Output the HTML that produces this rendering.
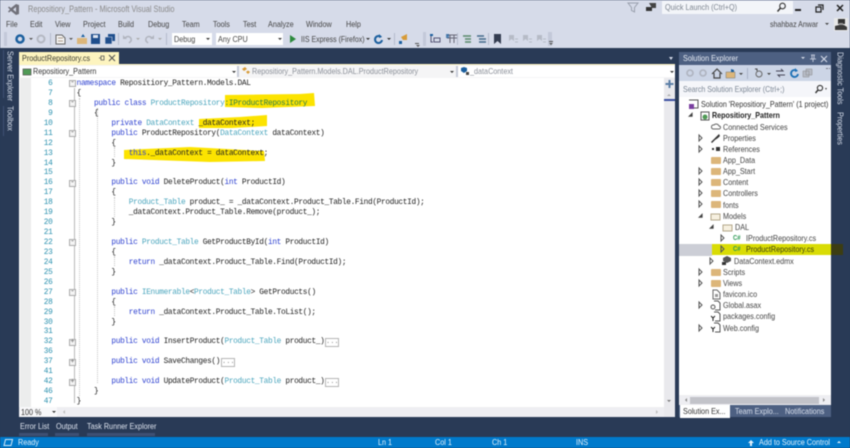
<!DOCTYPE html>
<html><head><meta charset="utf-8"><style>
*{box-sizing:border-box}
html,body{margin:0;padding:0;width:850px;height:448px;overflow:hidden;background:#293a56}
body{position:relative;font-family:"Liberation Sans",sans-serif;font-size:8.6px;color:#333;filter:blur(.4px)}
.a,.t,svg{position:absolute}
.a{display:block}
.t{white-space:nowrap;line-height:11px;transform:scaleX(.84);transform-origin:0 0}
.v{position:absolute;white-space:nowrap;color:#d8dfec;font-size:8.6px;line-height:11px;transform-origin:0 0;transform:translate(10.5px,0) rotate(90deg) scaleX(.84)}
pre{position:absolute;margin:0;font-family:"Liberation Mono",monospace;font-size:7.8px;letter-spacing:-.33px;line-height:9.94px;color:#222}
b{font-weight:normal;color:#2b3fd0}
i{font-style:normal;color:#4aa5bd}
#n{left:30px;top:80px;width:22.5px;text-align:right;color:#2b91af}
#c{left:76.6px;top:80px}
.m{position:absolute;left:69px;width:7px;height:7px;border:1px solid #aaa;background:#f4f4f4;color:#666;font:7px/5px "Liberation Mono",monospace;text-align:center}
.d{position:absolute;border:1px solid #b5b5b5;color:#888;height:9px;font:7px/6px "Liberation Mono",monospace;width:14px;text-align:center;background:#fff}
.g{position:absolute;border-left:1px dotted #c4c4c4}
.f{position:absolute;width:10px;height:7px;background:#dcb67a;border-radius:1px}
.e{position:absolute;color:#444;font-size:7px;line-height:7px}
</style></head><body>

<!-- title / menu / toolbar -->
<div class="a" style="left:0;top:0;width:850px;height:47.5px;background:#d6dbe9"></div>
<svg style="left:7px;top:3px" width="14" height="13" viewBox="0 0 14 13"><path d="M9 1l3 1v9l-3 1-5-4-2 1.500-1-1 2-2-2-2 1-1 2 1.500z" fill="#71717a"/><path d="M9 4L6 6.500 9 9z" fill="#d6dbe9"/></svg>
<div class="t" style="left:28px;top:4px;color:#8a8a8a;font-size:8.800px">Repositiory_Pattern - Microsoft Visual Studio</div>
<div class="t" style="left:6px;top:18.500px;color:#444">File</div>
<div class="t" style="left:30px;top:18.500px;color:#444">Edit</div>
<div class="t" style="left:55px;top:18.500px;color:#444">View</div>
<div class="t" style="left:83px;top:18.500px;color:#444">Project</div>
<div class="t" style="left:118px;top:18.500px;color:#444">Build</div>
<div class="t" style="left:148px;top:18.500px;color:#444">Debug</div>
<div class="t" style="left:182px;top:18.500px;color:#444">Team</div>
<div class="t" style="left:213px;top:18.500px;color:#444">Tools</div>
<div class="t" style="left:243px;top:18.500px;color:#444">Test</div>
<div class="t" style="left:268px;top:18.500px;color:#444">Analyze</div>
<div class="t" style="left:306px;top:18.500px;color:#444">Window</div>
<div class="t" style="left:346px;top:18.500px;color:#444">Help</div>

<div class="a" style="left:4px;top:32px;width:3px;height:14px;background:#c3c9d9"></div>
<svg style="left:14px;top:33px" width="16" height="12"><circle cx="6" cy="6" r="3.500" fill="none" stroke="#1b5f9e" stroke-width="2.500"/></svg>
<div class="a" style="left:29px;top:38px;border:2px solid transparent;border-top:2px solid #555"></div>
<svg style="left:35px;top:33px" width="12" height="12"><circle cx="6" cy="6" r="3.500" fill="none" stroke="#b4b8c2" stroke-width="2"/></svg>
<div class="a" style="left:50px;top:33px;width:1px;height:12px;background:#b4bbcc"></div>
<svg style="left:55px;top:33px" width="11" height="12"><path d="M1 2h6l3 3v6H1z" fill="#f4f4f4" stroke="#666"/><path d="M3 5h5M3 8h5" stroke="#a98"/></svg>
<div class="a" style="left:69px;top:38px;border:2px solid transparent;border-top:2px solid #555"></div>
<svg style="left:76px;top:33px" width="12" height="12"><path d="M1 5h10v6H1z" fill="#dcb67a"/><path d="M5 4l2-3 2 3z" fill="#1b5f9e"/></svg>
<svg style="left:90px;top:33px" width="11" height="12"><path d="M1 1h9v10H1z" fill="#1f4e8c"/><path d="M3 2h5v3H3z" fill="#dfe6f2"/></svg>
<svg style="left:104px;top:33px" width="12" height="12"><path d="M4 1h7v7H4z" fill="#1f4e8c"/><path d="M1 4h7v7H1z" fill="#1f4e8c" stroke="#d6dbe9" stroke-width=".6"/></svg>
<div class="a" style="left:118px;top:33px;width:1px;height:12px;background:#b4bbcc"></div>
<svg style="left:122px;top:33px" width="11" height="12"><path d="M3 5c3-3 7-1 6 3l-2 2" fill="none" stroke="#b0b4be" stroke-width="1.500"/><path d="M1 2v4h4z" fill="#b0b4be"/></svg>
<div class="a" style="left:136px;top:38px;border:2px solid transparent;border-top:2px solid #aaa"></div>
<svg style="left:144px;top:33px" width="11" height="12"><path d="M8 5c-3-3-7-1-6 3l2 2" fill="none" stroke="#b0b4be" stroke-width="1.500"/><path d="M10 2v4H6z" fill="#b0b4be"/></svg>
<div class="a" style="left:158px;top:38px;border:2px solid transparent;border-top:2px solid #aaa"></div>
<div class="a" style="left:166px;top:33px;width:1px;height:12px;background:#b4bbcc"></div>

<div class="a" style="left:172px;top:33px;width:40px;height:12px;background:#fff"></div>
<div class="t" style="left:174px;top:33.500px;color:#444">Debug</div>
<div class="a" style="left:206px;top:38px;border:2px solid transparent;border-top:2px solid #333"></div>
<div class="a" style="left:216px;top:33px;width:67px;height:12px;background:#fff"></div>
<div class="t" style="left:218px;top:33.500px;color:#444">Any CPU</div>
<div class="a" style="left:278px;top:38px;border:2px solid transparent;border-top:2px solid #333"></div>
<svg style="left:289px;top:34px" width="8" height="10"><path d="M1 1l6 4-6 4z" fill="#2c8a3c"/></svg>
<div class="t" style="left:301px;top:33.500px;color:#444;font-size:8.300px">IIS Express (Firefox)</div>
<div class="a" style="left:366px;top:38px;border:2px solid transparent;border-top:2px solid #333"></div>
<svg style="left:372px;top:33px" width="12" height="12"><path d="M9 4a3.500 3.500 0 1 0 1 3" fill="none" stroke="#1b5f9e" stroke-width="2"/><path d="M7 1l3 3-3 1z" fill="#1b5f9e"/></svg>
<div class="a" style="left:387px;top:38px;border:2px solid transparent;border-top:2px solid #333"></div>
<div class="a" style="left:394px;top:33px;width:1px;height:12px;background:#b4bbcc"></div>
<svg style="left:397px;top:33px" width="12" height="12"><path d="M2 8h3v3H2z" fill="#1b5f9e"/><path d="M4 4l6-3v6H6z" fill="#d79b38"/></svg>
<div class="a" style="left:415px;top:43px;width:4px;height:1px;background:#555"></div>
<div class="a" style="left:416px;top:44.500px;border:2px solid transparent;border-top:2px solid #555"></div>
<div class="a" style="left:423px;top:32px;width:3px;height:14px;background:#c3c9d9"></div>

<svg style="left:429px;top:33px" width="14" height="12"><path d="M2 2v7h2M5 5h6v4H5z" fill="none" stroke="#557"/><path d="M1 1h3v2H1z" fill="#1b5f9e"/></svg>
<svg style="left:445px;top:33px" width="14" height="12"><path d="M2 2h10M2 5h10M5 2v8M9 2v8" stroke="#667" fill="none"/><path d="M1 1h3v4H1z" fill="#1b5f9e" opacity=".7"/></svg>
<div class="a" style="left:457px;top:33px;width:1px;height:12px;background:#b4bbcc"></div>
<svg style="left:461px;top:33px" width="12" height="12"><path d="M2 3h8M4 6h6M4 9h6" stroke="#5a8a6a" stroke-width="1.500"/></svg>
<svg style="left:475px;top:33px" width="14" height="12"><path d="M2 3h7M4 6h7M4 9h7" stroke="#446a8a" stroke-width="1.500"/></svg>
<div class="a" style="left:488px;top:33px;width:1px;height:12px;background:#b4bbcc"></div>
<svg style="left:492px;top:33px" width="12" height="12"><path d="M2 1h7v10L5.500 8 2 11z" fill="#333c50"/></svg>
<svg style="left:507px;top:33px" width="12" height="12"><path d="M2 2h5v6L4.500 6 2 8z" fill="#b6bbc6"/><path d="M8 6h3M8 9h3" stroke="#b6bbc6"/></svg>
<svg style="left:521px;top:33px" width="12" height="12"><path d="M2 2h5v6L4.500 6 2 8z" fill="#b6bbc6"/><path d="M8 6h3M8 9h3" stroke="#b6bbc6"/></svg>
<svg style="left:535px;top:33px" width="12" height="12"><path d="M2 2h5v6L4.500 6 2 8z" fill="#b6bbc6"/><path d="M8 6h3M8 9h3" stroke="#b6bbc6"/></svg>
<div class="a" style="left:548px;top:32px;width:4px;height:14px;background:#c3c9d9"></div>
<div class="a" style="left:549px;top:41px;width:4px;height:1px;background:#555"></div>
<div class="a" style="left:549px;top:43px;border:2px solid transparent;border-top:2px solid #555"></div>

<svg style="left:627px;top:2px" width="12" height="11"><path d="M1 1h10L7.500 5.500V10l-3-1.500v-3z" fill="none" stroke="#9aa0ad"/></svg>
<svg style="left:645px;top:2px" width="12" height="11"><path d="M4 1h7v5H7" fill="#444"/><path d="M1 5h6v4H1z" fill="#333"/></svg>
<div class="a" style="left:662px;top:1px;width:131px;height:12.500px;background:#f3f5f9"></div>
<div class="t" style="left:664.500px;top:2px;color:#7d8590">Quick Launch (Ctrl+Q)</div>
<svg style="left:776px;top:2px" width="11" height="11"><circle cx="6.500" cy="4" r="2.800" fill="none" stroke="#333" stroke-width="1.100"/><path d="M4.500 6L1.500 9.500" stroke="#333" stroke-width="1.500"/></svg>
<div class="a" style="left:795px;top:8.500px;width:6px;height:2px;background:#222"></div>
<svg style="left:815px;top:4px" width="9" height="9"><path d="M3 1h5v5M1 3h5v5H1z" fill="none" stroke="#222" stroke-width="1.200"/></svg>
<svg style="left:836px;top:4px" width="9" height="9"><path d="M1 1l6 6M7 1L1 7" stroke="#222" stroke-width="1.500"/></svg>
<div class="t" style="left:770px;top:19px;color:#444;font-size:8.400px">shahbaz Anwar</div>
<div class="a" style="left:825px;top:23px;border:2px solid transparent;border-top:2px solid #444"></div>
<svg style="left:834px;top:18px" width="14" height="13"><path d="M0 0h14v13H0z" fill="#e8e8e8"/><path d="M4 1h7v5H4z" fill="#333"/><path d="M1 12V8l4-1h5l3 2v3z" fill="#3a3a3a"/><path d="M5 5h4v2H5z" fill="#999"/></svg>

<!-- left rail -->
<div class="v" style="left:5px;top:51px;">Server Explorer</div>
<div class="v" style="left:5px;top:106px;">Toolbox</div>
<div class="a" style="left:3px;top:50px;width:1px;height:48px;background:#3e5074"></div>
<div class="a" style="left:3px;top:106px;width:1px;height:30px;background:#3e5074"></div>

<!-- document tab -->
<div class="a" style="left:19px;top:52px;width:99.500px;height:12px;background:#fdf4bf"></div>
<div class="t" style="left:22px;top:52.500px;color:#3b3b2e">ProductRepository.cs</div>
<svg style="left:98px;top:54px" width="8" height="8"><path d="M1 4h2M3 2h3v4H3z" fill="none" stroke="#555" stroke-width=".8"/></svg>
<svg style="left:108px;top:53.500px" width="9" height="9"><path d="M1 1l6 6M7 1L1 7" stroke="#555" stroke-width="1.100"/></svg>
<div class="a" style="left:19px;top:64px;width:656px;height:1.500px;background:#fdf4bf"></div>
<div class="a" style="left:669px;top:57px;border:2.500px solid transparent;border-top:3px solid #d6dbe9"></div>

<!-- nav bar -->
<div class="a" style="left:19px;top:65px;width:656px;height:13px;background:#f5f5f6"></div>
<div class="a" style="left:20px;top:66px;width:217px;height:11px;background:#fff"></div>
<div class="a" style="left:237px;top:66px;width:2px;height:11px;background:#c6cbd8"></div>
<div class="a" style="left:456px;top:66px;width:2px;height:11px;background:#c6cbd8"></div>
<div class="a" style="left:458px;top:66px;width:217px;height:11px;background:#fff"></div>
<svg style="left:22px;top:67px" width="10" height="9"><path d="M1 2h8v6H1z" fill="#4f9a55" stroke="#555" stroke-width=".7"/></svg>
<div class="t" style="left:33px;top:66px;color:#333">Repositiory_Pattern</div>
<div class="a" style="left:232px;top:71px;border:2px solid transparent;border-top:2.500px solid #333"></div>
<svg style="left:241px;top:66px" width="10" height="10"><path d="M1 3l3-2 2 2-3 2z" fill="#d79b38"/><path d="M5 6l2-1.500L9 6 7 8z" fill="#d79b38"/></svg>
<div class="t" style="left:252px;top:66px;color:#8a8f98">Repositiory_Pattern.Models.DAL.ProductRepository</div>
<div class="a" style="left:450px;top:71px;border:2px solid transparent;border-top:2.500px solid #333"></div>
<svg style="left:459px;top:66px" width="11" height="10"><path d="M2 2l3-1 3 1v3L5 7 2 5z" fill="#1b5f9e"/><path d="M7 6h3v3H7z" fill="#444"/></svg>
<div class="t" style="left:470px;top:66px;color:#8a8f98">_dataContext</div>
<div class="a" style="left:670px;top:71px;border:2px solid transparent;border-top:2.500px solid #333"></div>

<!-- editor -->
<div class="a" style="left:19px;top:78px;width:656px;height:339px;background:#fff"></div>
<div class="a" style="left:20px;top:78px;width:11px;height:329px;background:#eceded"></div>

<!-- highlights -->
<svg style="left:0;top:0" width="850" height="448">
<path d="M225 95L300 94L314 93L315 106L262 108L225 107Z" fill="#fce300"/>
<path d="M199 119L240 117L267 115L267 126L232 128L199 128Z" fill="#fce300"/>
<path d="M124 150L190 147L264 151L265 161L210 162L124 159Z" fill="#fce300"/>
</svg>

<pre id="n">6
7
8
9
10
11
12
13
14
15
16
17
18
19
20
21
22
23
24
25
26
27
28
29
30
31
32
36
37
41
42
46
47</pre>

<div class="g" style="left:74px;top:88px;height:315px;border-left:1px solid #b8b8b8"></div>
<div class="g" style="left:79px;top:98px;height:298px"></div>
<div class="g" style="left:96.500px;top:108px;height:275px"></div>
<div class="g" style="left:114px;top:147px;height:10px"></div>
<div class="g" style="left:114px;top:197px;height:20px"></div>
<div class="g" style="left:114px;top:256px;height:10px"></div>
<div class="g" style="left:114px;top:306px;height:10px"></div>

<div class="m" style="top:80px">-</div>
<div class="m" style="top:100px">-</div>
<div class="m" style="top:130px">-</div>
<div class="m" style="top:180px">-</div>
<div class="m" style="top:239px">-</div>
<div class="m" style="top:289px">-</div>
<div class="m" style="top:339px">+</div>
<div class="m" style="top:359px">+</div>
<div class="m" style="top:379px">+</div>

<pre id="c"><b>namespace</b> Repositiory_Pattern.Models.DAL
{
    <b>public</b> <b>class</b> <i>ProductRepository</i><span style="color:#2a7d4a">:IProductRepository</span>
    {
        <b>private</b> <i>DataContext</i> _dataContext;
        <b>public</b> ProductRepository(<i>DataContext</i> dataContext)
        {
            <b>this</b>._dataContext = dataContext;
        }

        <b>public</b> <b>void</b> DeleteProduct(<b>int</b> ProductId)
        {
            <i>Product_Table</i> product_ = _dataContext.Product_Table.Find(ProductId);
            _dataContext.Product_Table.Remove(product_);
        }

        <b>public</b> <i>Product_Table</i> GetProductById(<b>int</b> ProductId)
        {
            <b>return</b> _dataContext.Product_Table.Find(ProductId);
        }

        <b>public</b> <i>IEnumerable</i>&lt;<i>Product_Table</i>&gt; GetProducts()
        {
            <b>return</b> _dataContext.Product_Table.ToList();
        }

        <b>public</b> <b>void</b> InsertProduct(<i>Product_Table</i> product_)

        <b>public</b> <b>void</b> SaveChanges()

        <b>public</b> <b>void</b> UpdateProduct(<i>Product_Table</i> product_)
    }
}</pre>
<div class="d" style="left:325px;top:338px">...</div>
<div class="d" style="left:221px;top:358px">...</div>
<div class="d" style="left:325px;top:378px">...</div>

<!-- editor scrollbar -->
<div class="a" style="left:664px;top:78px;width:11px;height:339px;background:#e9e9ed"></div>
<svg style="left:665px;top:79px" width="9" height="10"><path d="M3.500 1h2v3h3v2h-3v3h-2V6h-3V4h3z" fill="#5b7ea6"/></svg>
<div class="a" style="left:667px;top:92px;border:2px solid transparent;border-bottom:2.500px solid #aaa"></div>
<div class="a" style="left:664px;top:99px;width:11px;height:1.500px;background:#3b4fa0"></div>
<div class="a" style="left:667px;top:400px;border:2px solid transparent;border-top:2.500px solid #777"></div>

<!-- zoom row -->
<div class="a" style="left:19px;top:407px;width:645px;height:10px;background:#eeeef2"></div>
<div class="a" style="left:20px;top:407px;width:37px;height:10px;background:#f8f8fa"></div>
<div class="t" style="left:21px;top:406.500px;color:#333">100 %</div>
<div class="a" style="left:52px;top:411px;border:2px solid transparent;border-top:2.500px solid #333"></div>
<div class="a" style="left:61px;top:410px;border:2px solid transparent;border-right:2.500px solid #bbb"></div>
<div class="a" style="left:656px;top:410px;border:2px solid transparent;border-left:2.500px solid #bbb"></div>

<!-- solution explorer -->
<div class="a" style="left:679px;top:52px;width:152px;height:13px;background:#4d6082"></div>
<div class="t" style="left:682.500px;top:53px;color:#e6ebf4">Solution Explorer</div>
<div class="a" style="left:801px;top:57px;border:2px solid transparent;border-top:2.500px solid #d6dbe9"></div>
<svg style="left:809px;top:54px" width="8" height="9"><path d="M2 1h4M3 1v4h2V1M1 5h6M4 5v3" stroke="#d6dbe9" fill="none" stroke-width=".8"/></svg>
<svg style="left:820px;top:55px" width="8" height="8"><path d="M1 1l6 6M7 1L1 7" stroke="#d6dbe9" stroke-width="1.100"/></svg>
<div class="a" style="left:679px;top:65px;width:152px;height:16px;background:#ccd5e6"></div>
<svg style="left:685px;top:68px" width="30" height="10"><circle cx="5" cy="5" r="3" fill="none" stroke="#aeb3bf" stroke-width="1.600"/><circle cx="18" cy="5" r="3" fill="none" stroke="#aeb3bf" stroke-width="1.600"/></svg>
<svg style="left:711px;top:68px" width="12" height="11"><path d="M1 6l5-5 5 5M3 5v5h6V5" fill="none" stroke="#444" stroke-width="1.200"/></svg>
<svg style="left:725px;top:68px" width="13" height="11"><path d="M1 4h9v6H1z" fill="#dcb67a" stroke="#777" stroke-width=".5"/><path d="M6 1l3 1v2H6z" fill="#1b5f9e"/></svg>
<div class="a" style="left:739px;top:73px;border:2px solid transparent;border-top:2.500px solid #444"></div>
<div class="a" style="left:747px;top:68px;width:1px;height:11px;background:#aab3c7"></div>
<svg style="left:753px;top:67px" width="12" height="12"><circle cx="6" cy="7" r="3" fill="none" stroke="#666"/><path d="M2 2h2v2" stroke="#444" fill="none"/></svg>
<div class="a" style="left:767px;top:73px;border:2px solid transparent;border-top:2.500px solid #444"></div>
<svg style="left:775px;top:68px" width="11" height="11"><path d="M1 3h7l-2-2M10 7H3l2 2" stroke="#445" fill="none"/></svg>
<svg style="left:788px;top:67px" width="12" height="12"><path d="M9 4a3.500 3.500 0 1 0 1 3" fill="none" stroke="#1b6fb5" stroke-width="1.800"/><path d="M7 1l3 3-3 1z" fill="#1b6fb5"/></svg>
<svg style="left:802px;top:68px" width="11" height="10"><path d="M4 1h6v6H4zM1 3h6v6H1z" fill="#b6bbc6" stroke="#888" stroke-width=".5"/></svg>
<div class="a" style="left:826px;top:68px;width:4px;height:1px;border-top:1px dotted #778"></div>
<div class="a" style="left:679px;top:81px;width:152px;height:15.500px;background:#f5f6fa"></div>
<div class="t" style="left:683px;top:83.500px;color:#7b8694;font-size:8.400px">Search Solution Explorer (Ctrl+;)</div>
<svg style="left:814px;top:84px" width="10" height="10"><circle cx="6" cy="4" r="2.600" fill="none" stroke="#333" stroke-width="1.100"/><path d="M4 6L1.500 9" stroke="#333" stroke-width="1.400"/></svg>
<div class="a" style="left:825px;top:88px;border:1.500px solid transparent;border-top:2px solid #444"></div>

<div class="a" style="left:679px;top:96.500px;width:152px;height:308.500px;background:#fff"></div>

<!-- tree -->
<div class="a" style="left:679px;top:243.500px;width:33px;height:12px;background:#ccced6"></div>
<svg style="left:0;top:0" width="850" height="448">
<path d="M712 244H832V255H712Z" fill="#d9dc05"/>
<path d="M831 244H843V255H831Z" fill="#3c3d12"/>
</svg>

<svg style="left:688px;top:99px" width="11" height="11"><path d="M1 1h9v8H4" fill="none" stroke="#555"/><path d="M1 5h5v5H1z" fill="#7a3fa0"/></svg>
<div class="t" style="left:700.500px;top:99px;color:#333;font-size:8.500px;width:155px;overflow:hidden">Solution 'Repositiory_Pattern' (1 project)</div>

<div class="e" style="left:688px;top:112px;font-size:6px">◢</div>
<svg style="left:700px;top:110px" width="10" height="11"><path d="M1 2h8v8H1z" fill="#fff" stroke="#555"/><circle cx="5" cy="7" r="2.500" fill="#4f9a55"/></svg>
<div class="t" style="left:711.500px;top:110px;color:#222;font-size:8.500px;font-weight:bold">Repositiory_Pattern</div>

<svg style="left:711px;top:122px" width="10" height="10"><path d="M2 7a2 2 0 0 1 1-4 3 3 0 0 1 5 1 1.500 1.500 0 0 1 0 3z" fill="none" stroke="#666"/></svg>
<div class="t" style="left:723px;top:121.500px;color:#444">Connected Services</div>

<svg style="left:698px;top:134px" width="5" height="8"><path d="M1 1l3 3-3 3z" fill="none" stroke="#555"/></svg>
<svg style="left:710px;top:133px" width="11" height="10"><path d="M9 1L6 4 3 7 1 9l1 1 3-3 3-2 2-2z" fill="#333"/></svg>
<div class="t" style="left:723px;top:132.500px;color:#444">Properties</div>

<svg style="left:698px;top:145px" width="5" height="8"><path d="M1 1l3 3-3 3z" fill="none" stroke="#555"/></svg>
<svg style="left:711px;top:146px" width="10" height="6"><path d="M1 2h2v2H1z" fill="#333"/><path d="M5 1h4v4H5z" fill="#333"/></svg>
<div class="t" style="left:723px;top:143.500px;color:#444">References</div>

<div class="f" style="left:711px;top:157px"></div>
<div class="t" style="left:723px;top:154.700px;color:#444">App_Data</div>

<svg style="left:698px;top:167px" width="5" height="8"><path d="M1 1l3 3-3 3z" fill="none" stroke="#555"/></svg>
<div class="f" style="left:711px;top:168px"></div>
<div class="t" style="left:723px;top:165.900px;color:#444">App_Start</div>

<svg style="left:698px;top:178px" width="5" height="8"><path d="M1 1l3 3-3 3z" fill="none" stroke="#555"/></svg>
<div class="f" style="left:711px;top:179px"></div>
<div class="t" style="left:723px;top:177px;color:#444">Content</div>

<svg style="left:698px;top:189px" width="5" height="8"><path d="M1 1l3 3-3 3z" fill="none" stroke="#555"/></svg>
<div class="f" style="left:711px;top:190px"></div>
<div class="t" style="left:723px;top:188px;color:#444">Controllers</div>

<svg style="left:698px;top:200px" width="5" height="8"><path d="M1 1l3 3-3 3z" fill="none" stroke="#555"/></svg>
<div class="f" style="left:711px;top:201px"></div>
<div class="t" style="left:723px;top:199.500px;color:#444">fonts</div>

<div class="e" style="left:698px;top:213px;font-size:6px">◢</div>
<svg style="left:710px;top:212px" width="12" height="9"><path d="M1 2h9v6H1z" fill="#f6f0e0" stroke="#b5a78a"/></svg>
<div class="t" style="left:723px;top:210.500px;color:#444">Models</div>

<div class="e" style="left:709px;top:224px;font-size:6px">◢</div>
<svg style="left:722px;top:223px" width="12" height="9"><path d="M1 2h9v6H1z" fill="#f6f0e0" stroke="#b5a78a"/></svg>
<div class="t" style="left:734.500px;top:221.500px;color:#444">DAL</div>

<svg style="left:720px;top:234px" width="5" height="8"><path d="M1 1l3 3-3 3z" fill="none" stroke="#555"/></svg>
<div class="t" style="left:733px;top:233px;color:#2f9a55;font-size:7px;font-weight:bold">C#</div>
<div class="t" style="left:745.500px;top:233px;color:#444">IProductRepository.cs</div>

<svg style="left:720px;top:245px" width="5" height="8"><path d="M1 1l3 3-3 3z" fill="none" stroke="#555"/></svg>
<div class="t" style="left:733px;top:244px;color:#2f9a55;font-size:7px;font-weight:bold">C#</div>
<div class="t" style="left:745.500px;top:244px;color:#3a3c10">ProductRepository.cs</div>

<svg style="left:709px;top:257px" width="5" height="8"><path d="M1 1l3 3-3 3z" fill="none" stroke="#555"/></svg>
<svg style="left:721px;top:255px" width="12" height="11"><path d="M6 1l4 2v3L6 8 2 6V3z" fill="#555"/><path d="M1 7h4v3H1z" fill="#333"/></svg>
<div class="t" style="left:734px;top:255.500px;color:#444">DataContext.edmx</div>

<svg style="left:698px;top:268px" width="5" height="8"><path d="M1 1l3 3-3 3z" fill="none" stroke="#555"/></svg>
<div class="f" style="left:711px;top:269px"></div>
<div class="t" style="left:723px;top:266.500px;color:#444">Scripts</div>

<svg style="left:698px;top:279px" width="5" height="8"><path d="M1 1l3 3-3 3z" fill="none" stroke="#555"/></svg>
<div class="f" style="left:711px;top:280px"></div>
<div class="t" style="left:723px;top:277.500px;color:#444">Views</div>

<svg style="left:711px;top:289px" width="10" height="11"><path d="M2 1h4l3 3v6H2z" fill="#fff" stroke="#666"/><path d="M4 5h3v3H4z" fill="#999"/></svg>
<div class="t" style="left:723px;top:289px;color:#444">favicon.ico</div>

<svg style="left:698px;top:301px" width="5" height="8"><path d="M1 1l3 3-3 3z" fill="none" stroke="#555"/></svg>
<svg style="left:710px;top:300px" width="11" height="11"><path d="M4 1h4l2 2v7H5" fill="#fff" stroke="#555"/><circle cx="3" cy="7" r="2" fill="#fff" stroke="#555"/></svg>
<div class="t" style="left:723px;top:300px;color:#444">Global.asax</div>

<svg style="left:710px;top:311px" width="11" height="11"><path d="M4 1h4l2 2v7H5" fill="#fff" stroke="#555"/><path d="M1 5l2 2 2-2M3 7v3" stroke="#222" fill="none"/></svg>
<div class="t" style="left:723px;top:311px;color:#444">packages.config</div>

<svg style="left:698px;top:324px" width="5" height="8"><path d="M1 1l3 3-3 3z" fill="none" stroke="#555"/></svg>
<svg style="left:710px;top:322px" width="11" height="11"><path d="M4 1h4l2 2v7H5" fill="#fff" stroke="#555"/><path d="M1 5l2 2 2-2M3 7v3" stroke="#222" fill="none"/></svg>
<div class="t" style="left:723px;top:322.500px;color:#444">Web.config</div>

<!-- se scrollbar -->
<div class="a" style="left:679px;top:395px;width:152px;height:10px;background:#eeeef2"></div>
<div class="a" style="left:690px;top:396.500px;width:129px;height:7px;background:#c2c3c9"></div>
<div class="a" style="left:683px;top:398px;border:2px solid transparent;border-right:2.500px solid #888"></div>
<div class="a" style="left:823px;top:398px;border:2px solid transparent;border-left:2.500px solid #888"></div>
<div class="a" style="left:679px;top:405px;width:152px;height:12px;background:#4d6082"></div>
<div class="a" style="left:680px;top:405px;width:50px;height:12.500px;background:#fff"></div>
<div class="t" style="left:683px;top:405.500px;color:#333">Solution Ex...</div>
<div class="t" style="left:734.500px;top:406px;color:#d8dfec">Team Explo...</div>
<div class="t" style="left:785px;top:406px;color:#d8dfec">Notifications</div>

<!-- right rail -->
<div class="v" style="left:835px;top:52px">Diagnostic Tools</div>
<div class="v" style="left:835px;top:112px">Properties</div>

<!-- bottom tabs -->
<div class="t" style="left:19.500px;top:421px;color:#dde3ee">Error List</div>
<div class="t" style="left:55.500px;top:421px;color:#dde3ee">Output</div>
<div class="t" style="left:87px;top:421px;color:#dde3ee">Task Runner Explorer</div>
<div class="a" style="left:19px;top:433px;width:29px;height:3px;background:#3e5074"></div>
<div class="a" style="left:55px;top:433px;width:24px;height:3px;background:#3e5074"></div>
<div class="a" style="left:87px;top:433px;width:68px;height:3px;background:#3e5074"></div>

<!-- status bar -->
<div class="a" style="left:0;top:437px;width:850px;height:11px;background:#007acc"></div>
<svg style="left:3px;top:438px" width="11" height="9"><path d="M2.500 1.500h7l-1.500 6h-7z" fill="none" stroke="#d5e8f6"/></svg>
<div class="t" style="left:18px;top:437px;color:#e4f1fa">Ready</div>
<div class="t" style="left:378px;top:437px;color:#e4f1fa">Ln 1</div>
<div class="t" style="left:435px;top:437px;color:#e4f1fa">Col 1</div>
<div class="t" style="left:492px;top:437px;color:#e4f1fa">Ch 1</div>
<div class="t" style="left:576px;top:437px;color:#e4f1fa">INS</div>
<svg style="left:747px;top:439px" width="8" height="8"><path d="M4 1L1 4h2v3h2V4h2z" fill="#e4f1fa"/></svg>
<div class="t" style="left:759px;top:437px;color:#e4f1fa">Add to Source Control</div>
<div class="a" style="left:837px;top:439px;border:2.500px solid transparent;border-bottom:2.500px solid #e4f1fa"></div>
</body></html>
